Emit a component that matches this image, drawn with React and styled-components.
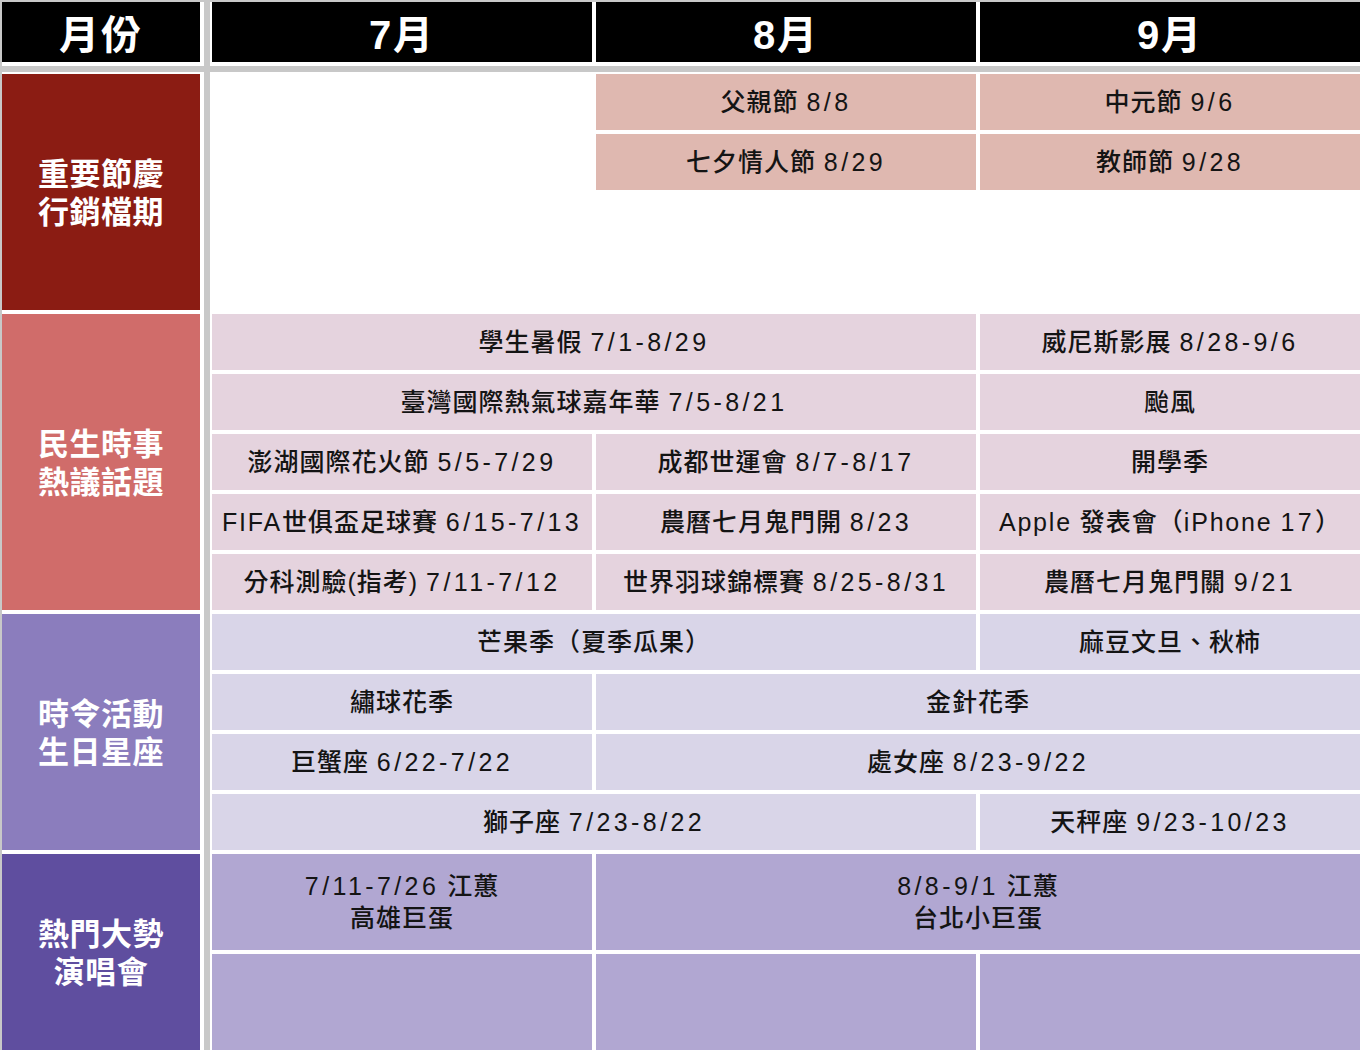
import React from "react";
import styled, { createGlobalStyle } from "styled-components";

const Global = createGlobalStyle`
  html, body { margin: 0; padding: 0; background: #ffffff; }
  body { font-family: "Liberation Sans", "Noto Sans CJK TC", sans-serif; }
`;

const GRAY = "#c8c8c8";

const Table = styled.div`
  display: grid;
  grid-template-columns: 198px 4px repeat(3, 380px);
  grid-template-rows: 60px 4px repeat(13, 56px) 96px 96px;
  gap: 4px;
  width: 1358px;
  background: #ffffff;
  border-top: 2px solid ${GRAY};
  border-left: 2px solid ${GRAY};
  overflow: hidden;
`;

const VSep = styled.div`
  grid-column: 2;
  grid-row: 1 / -1;
  background: ${GRAY};
  margin-right: -2px;
`;

const HSep = styled.div`
  grid-column: 1 / -1;
  grid-row: 2;
  background: ${GRAY};
  margin-bottom: -2px;
`;

const Head = styled.div`
  grid-column: ${(p) => p.$col};
  grid-row: 1;
  background: #000000;
  color: #ffffff;
  display: flex;
  align-items: center;
  justify-content: center;
  font-family: "Liberation Sans", "Noto Sans CJK TC", sans-serif;
  font-weight: 700;
  font-size: 40px;
  letter-spacing: 2px;
`;

const Label = styled.div`
  grid-column: 1;
  grid-row: ${(p) => p.$row} / span ${(p) => p.$span};
  background: ${(p) => p.$bg};
  color: #ffffff;
  display: flex;
  flex-direction: column;
  align-items: center;
  justify-content: center;
  gap: 7px;
  text-align: center;
  font-family: "Noto Sans CJK TC", sans-serif;
  font-weight: 700;
  font-size: 31px;
  letter-spacing: 0.5px;
  padding-bottom: 4px;
`;

const LabelLine = styled.span`
  display: block;
  line-height: 31px;
  height: 31px;
  white-space: nowrap;
`;

const TONES = {
  rose: "#dfb8b0",
  pink: "#e5d3de",
  lilac: "#d9d5e8",
  violet: "#b1a7d2",
};

const Cell = styled.div`
  grid-column: ${(p) => p.$col} / span ${(p) => p.$span};
  grid-row: ${(p) => p.$row};
  background: ${(p) => TONES[p.$tone]};
  color: #141414;
  display: flex;
  flex-direction: column;
  align-items: center;
  justify-content: center;
  text-align: center;
  font-family: "Liberation Sans", "Noto Sans CJK TC", sans-serif;
  font-weight: 500;
  font-size: 25px;
  line-height: 32px;
  letter-spacing: 1px;
`;

const Line = styled.span`
  display: block;
  white-space: nowrap;
`;

const Lat = styled.span`
  letter-spacing: ${(p) => (p.$alpha ? "1.8px" : "3.4px")};
`;

function Txt({ text }) {
  if (!text) return null;
  return text.split("\n").map((line, li) => {
    const parts = line.split(/([A-Za-z]+|[0-9/\-().]*[0-9][0-9/\-().]*)/);
    return (
      <Line key={li}>
        {parts.map((p, i) =>
          /[A-Za-z0-9]/.test(p) ? (
            <Lat key={i} $alpha={/^[A-Za-z]+$/.test(p)}>
              {p}
            </Lat>
          ) : (
            <React.Fragment key={i}>{p}</React.Fragment>
          )
        )}
      </Line>
    );
  });
}

const labels = [
  { row: 3, span: 4, bg: "#8b1c13", lines: ["重要節慶", "行銷檔期"] },
  { row: 7, span: 5, bg: "#d06c6a", lines: ["民生時事", "熱議話題"] },
  { row: 12, span: 4, bg: "#8b7dbd", lines: ["時令活動", "生日星座"] },
  { row: 16, span: 2, bg: "#5f4e9f", lines: ["熱門大勢", "演唱會"] },
];

const cells = [
  { r: 3, c: 4, s: 1, t: "rose", x: "父親節 8/8" },
  { r: 3, c: 5, s: 1, t: "rose", x: "中元節 9/6" },
  { r: 4, c: 4, s: 1, t: "rose", x: "七夕情人節 8/29" },
  { r: 4, c: 5, s: 1, t: "rose", x: "教師節 9/28" },

  { r: 7, c: 3, s: 2, t: "pink", x: "學生暑假 7/1-8/29" },
  { r: 7, c: 5, s: 1, t: "pink", x: "威尼斯影展 8/28-9/6" },
  { r: 8, c: 3, s: 2, t: "pink", x: "臺灣國際熱氣球嘉年華 7/5-8/21" },
  { r: 8, c: 5, s: 1, t: "pink", x: "颱風" },
  { r: 9, c: 3, s: 1, t: "pink", x: "澎湖國際花火節 5/5-7/29" },
  { r: 9, c: 4, s: 1, t: "pink", x: "成都世運會 8/7-8/17" },
  { r: 9, c: 5, s: 1, t: "pink", x: "開學季" },
  { r: 10, c: 3, s: 1, t: "pink", x: "FIFA世俱盃足球賽 6/15-7/13" },
  { r: 10, c: 4, s: 1, t: "pink", x: "農曆七月鬼門開 8/23" },
  { r: 10, c: 5, s: 1, t: "pink", x: "Apple 發表會（iPhone 17）" },
  { r: 11, c: 3, s: 1, t: "pink", x: "分科測驗(指考) 7/11-7/12" },
  { r: 11, c: 4, s: 1, t: "pink", x: "世界羽球錦標賽 8/25-8/31" },
  { r: 11, c: 5, s: 1, t: "pink", x: "農曆七月鬼門關 9/21" },

  { r: 12, c: 3, s: 2, t: "lilac", x: "芒果季（夏季瓜果）" },
  { r: 12, c: 5, s: 1, t: "lilac", x: "麻豆文旦、秋柿" },
  { r: 13, c: 3, s: 1, t: "lilac", x: "繡球花季" },
  { r: 13, c: 4, s: 2, t: "lilac", x: "金針花季" },
  { r: 14, c: 3, s: 1, t: "lilac", x: "巨蟹座 6/22-7/22" },
  { r: 14, c: 4, s: 2, t: "lilac", x: "處女座 8/23-9/22" },
  { r: 15, c: 3, s: 2, t: "lilac", x: "獅子座 7/23-8/22" },
  { r: 15, c: 5, s: 1, t: "lilac", x: "天秤座 9/23-10/23" },

  { r: 16, c: 3, s: 1, t: "violet", x: "7/11-7/26 江蕙\n高雄巨蛋" },
  { r: 16, c: 4, s: 2, t: "violet", x: "8/8-9/1 江蕙\n台北小巨蛋" },
  { r: 17, c: 3, s: 1, t: "violet", x: "" },
  { r: 17, c: 4, s: 1, t: "violet", x: "" },
  { r: 17, c: 5, s: 1, t: "violet", x: "" },
];

export default function App() {
  return (
    <>
      <Global />
      <Table>
        <Head $col={1}>月份</Head>
        <Head $col={3}>7月</Head>
        <Head $col={4}>8月</Head>
        <Head $col={5}>9月</Head>
        <VSep />
        <HSep />
        {labels.map((l) => (
          <Label key={l.row} $row={l.row} $span={l.span} $bg={l.bg}>
            {l.lines.map((t) => (
              <LabelLine key={t}>{t}</LabelLine>
            ))}
          </Label>
        ))}
        {cells.map((c, i) => (
          <Cell key={i} $row={c.r} $col={c.c} $span={c.s} $tone={c.t}>
            <Txt text={c.x} />
          </Cell>
        ))}
      </Table>
    </>
  );
}
